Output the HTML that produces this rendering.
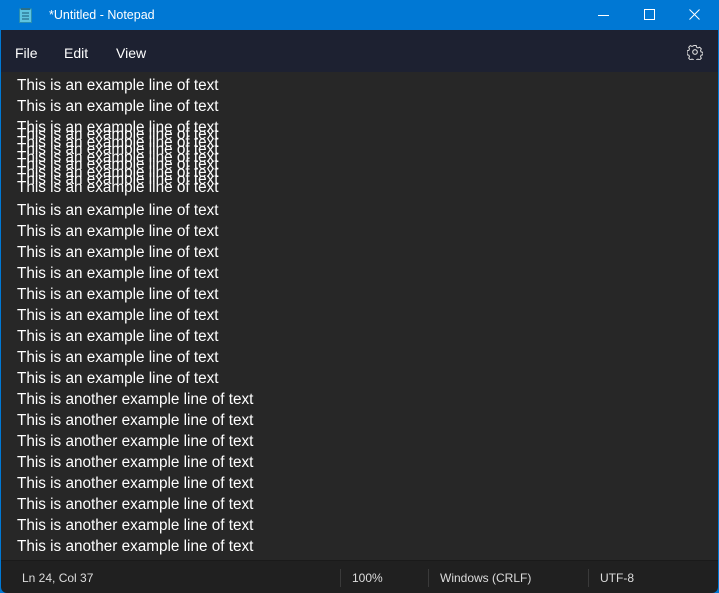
<!DOCTYPE html><html><head><style>
body{margin:0;width:719px;height:593px;overflow:hidden;background:#0078d4;font-family:"Liberation Sans",sans-serif}
.win{position:absolute;left:1px;top:0;width:717px;height:592px;}
.title{position:absolute;left:0;top:0;width:717px;height:30px;background:#0078d4;color:#fff;font-size:12.5px}
.menu{position:absolute;left:0;top:30px;width:717px;height:42px;background:#1d2131;color:#fff;font-size:14px}
.edit{position:absolute;left:0;top:72px;width:717px;height:488px;background:#272727;color:#fff;font-size:15.3px;overflow:hidden}
.status{position:absolute;left:0;top:560px;width:717px;height:32px;background:#202020;border-top:1px solid #1a1a1a;color:#ddd;font-size:12px;border-radius:0 0 6px 6px}
.l{position:absolute;left:16px;white-space:nowrap;line-height:16px}
.sep{position:absolute;top:8px;width:1px;height:18px;background:#3a3a3a}
</style></head><body><div class="win">
<div class="title">
<svg style="position:absolute;left:18px;top:8px" width="13" height="15"><rect x="0.5" y="1" width="12" height="13.5" fill="#5ec4e0" stroke="#2a8fb0"/><rect x="2" y="0" width="9" height="2" fill="#2a6f8a"/><line x1="3" y1="5" x2="10" y2="5" stroke="#1a5a78"/><line x1="3" y1="8" x2="10" y2="8" stroke="#1a5a78"/><line x1="3" y1="11" x2="10" y2="11" stroke="#1a5a78"/></svg>
<span style="position:absolute;left:48px;top:8px">*Untitled - Notepad</span>
<div style="position:absolute;left:597px;top:15px;width:11px;height:1px;background:#fff"></div>
<div style="position:absolute;left:643px;top:9px;width:9px;height:9px;border:1px solid #fff"></div>
<svg style="position:absolute;left:688px;top:9px" width="11" height="11"><path d="M0.5 0.5L10.5 10.5M10.5 0.5L0.5 10.5" stroke="#fff"/></svg>
</div>
<div class="menu">
<span style="position:absolute;left:14px;top:15px">File</span>
<span style="position:absolute;left:63px;top:15px">Edit</span>
<span style="position:absolute;left:115px;top:15px">View</span>
<svg style="position:absolute;left:686px;top:14px" width="16" height="16" viewBox="0 0 16 16"><circle cx="8" cy="8" r="2.3" fill="none" stroke="#ddd" stroke-width="1.1"/><path d="M6.8 1.5h2.4l.4 1.8 1.4.7 1.7-.8 1.6 1.7-.8 1.6.6 1.4 1.8.5v2.4l-1.8.4-.6 1.4.8 1.7-1.7 1.6-1.6-.8-1.4.6-.4 1.8H6.8l-.4-1.8-1.4-.6-1.7.8-1.6-1.7.8-1.6-.6-1.4-1.8-.4V6.8l1.8-.5.6-1.4-.8-1.6L3.3 1.6l1.7.8 1.4-.6z" fill="none" stroke="#ddd" stroke-width="1"/></svg>
</div>
<div class="edit" id="e"></div>
<div class="status">
<span style="position:absolute;left:21px;top:10px">Ln 24, Col 37</span>
<div class="sep" style="left:339px"></div>
<span style="position:absolute;left:351px;top:10px">100%</span>
<div class="sep" style="left:427px"></div>
<span style="position:absolute;left:439px;top:10px">Windows (CRLF)</span>
<div class="sep" style="left:587px"></div>
<span style="position:absolute;left:599px;top:10px">UTF-8</span>
</div>
</div>
<script>
var e=document.getElementById('e'),h='';
var a='This is an example line of text',b='This is another example line of text';
function L(y,t){h+='<div class="l" style="top:'+(y-72-6)+'px">'+t+'</div>';}
L(84,a);L(105,a);L(126,a);
for(var i=0;i<8;i++)L(133+i*7.5,a);
for(var i=0;i<9;i++)L(209+i*21,a);
for(var i=0;i<8;i++)L(398+i*21,b);
e.innerHTML=h;
</script>
</body></html>
